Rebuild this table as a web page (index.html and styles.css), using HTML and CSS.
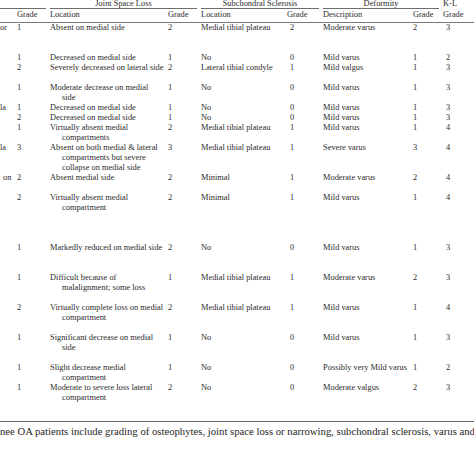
FILE: index.html
```html
<!DOCTYPE html>
<html>
<head>
<meta charset="utf-8">
<link rel="stylesheet" href="styles.css">
</head>
<body>
<div class="page">
<table class="tbl">
<colgroup>
<col class="c0"><col class="c1"><col class="c2"><col class="c3"><col class="c4"><col class="c5"><col class="c6"><col class="c7"><col class="c8">
</colgroup>
<thead>
<tr class="grp">
<th colspan="2"><div class="ul">&nbsp;</div></th>
<th colspan="2"><div class="ul ctr">Joint Space Loss</div></th>
<th colspan="2"><div class="ul ctr">Subchondral Sclerosis</div></th>
<th colspan="2"><div class="ul ctr">Deformity</div></th>
<th class="kl">K-L</th>
</tr>
<tr class="sub">
<th></th><th>Grade</th><th>Location</th><th>Grade</th><th>Location</th><th>Grade</th><th>Description</th><th>Grade</th><th>Grade</th>
</tr>
</thead>
<tbody>
<tr class="l3"><td>or</td><td>1</td><td>Absent on medial side</td><td>2</td><td>Medial tibial plateau</td><td class="n5">2</td><td>Moderate varus</td><td>2</td><td class="n8">3</td></tr>
<tr class="l1"><td></td><td>1</td><td>Decreased on medial side</td><td>1</td><td>No</td><td class="n5">0</td><td>Mild varus</td><td>1</td><td class="n8">2</td></tr>
<tr class="l2"><td></td><td>2</td><td>Severely decreased on lateral side</td><td>2</td><td>Lateral tibial condyle</td><td class="n5">1</td><td>Mild valgus</td><td>1</td><td class="n8">3</td></tr>
<tr class="l2"><td></td><td>1</td><td class="hang">Moderate decrease on medial<br>side</td><td>1</td><td>No</td><td class="n5">0</td><td>Mild varus</td><td>1</td><td class="n8">3</td></tr>
<tr class="l1"><td>la</td><td>1</td><td>Decreased on medial side</td><td>1</td><td>No</td><td class="n5">0</td><td>Mild varus</td><td>1</td><td class="n8">3</td></tr>
<tr class="l1"><td></td><td>2</td><td>Decreased on medial side</td><td>1</td><td>No</td><td class="n5">0</td><td>Mild varus</td><td>1</td><td class="n8">3</td></tr>
<tr class="l2"><td></td><td>1</td><td class="hang">Virtually absent medial<br>compartments</td><td>2</td><td>Medial tibial plateau</td><td class="n5">1</td><td>Mild varus</td><td>1</td><td class="n8">4</td></tr>
<tr class="l3"><td>la</td><td>3</td><td class="hang">Absent on both medial &amp; lateral<br>compartments but severe<br>collapse on medial side</td><td>3</td><td>Medial tibial plateau</td><td class="n5">1</td><td>Severe varus</td><td>3</td><td class="n8">4</td></tr>
<tr class="l2"><td><span class="ind">on</span></td><td>2</td><td>Absent medial side</td><td>2</td><td>Minimal</td><td class="n5">1</td><td>Moderate varus</td><td>2</td><td class="n8">4</td></tr>
<tr class="l5"><td></td><td>2</td><td class="hang">Virtually absent medial<br>compartment</td><td>2</td><td>Minimal</td><td class="n5">1</td><td>Mild varus</td><td>1</td><td class="n8">4</td></tr>
<tr class="l3"><td></td><td>1</td><td>Markedly reduced on medial side</td><td>2</td><td>No</td><td class="n5">0</td><td>Mild varus</td><td>1</td><td class="n8">3</td></tr>
<tr class="l3"><td></td><td>1</td><td class="hang">Difficult because of<br>malalignment; some loss</td><td>1</td><td>Medial tibial plateau</td><td class="n5">1</td><td>Moderate varus</td><td>2</td><td class="n8">3</td></tr>
<tr class="l3"><td></td><td>2</td><td class="hang">Virtually complete loss on medial<br>compartment</td><td>2</td><td>Medial tibial plateau</td><td class="n5">1</td><td>Mild varus</td><td>1</td><td class="n8">4</td></tr>
<tr class="l3"><td></td><td>1</td><td class="hang">Significant decrease on medial<br>side</td><td>1</td><td>No</td><td class="n5">0</td><td>Mild varus</td><td>1</td><td class="n8">3</td></tr>
<tr class="l2"><td></td><td>1</td><td class="hang">Slight decrease medial<br>compartment</td><td>1</td><td>No</td><td class="n5">0</td><td>Possibly very Mild varus</td><td>1</td><td class="n8">2</td></tr>
<tr class="l2"><td></td><td>1</td><td class="hang">Moderate to severe loss lateral<br>compartment</td><td>2</td><td>No</td><td class="n5">0</td><td>Moderate valgus</td><td>2</td><td class="n8">3</td></tr>
</tbody>
</table>
<div class="rule"></div>
<p class="caption">nee OA patients include grading of osteophytes, joint space loss or narrowing, subchondral sclerosis, varus and</p>
</div>
</body>
</html>
```
FILE: styles.css
```css
html, body {
  margin: 0;
  padding: 0;
  background: #fff;
}
.page {
  width: 474px;
  height: 474px;
  overflow: hidden;
  color: #2b2b2b;
  font-family: "Liberation Serif", serif;
}
.tbl {
  width: 474px;
  table-layout: fixed;
  border-collapse: collapse;
  margin-top: -1px;
  font-size: 8.4px;
  line-height: 10px;
}
.c0 { width: 17px; }
.c1 { width: 33px; }
.c2 { width: 118px; }
.c3 { width: 33px; }
.c4 { width: 86px; }
.c5 { width: 36px; }
.c6 { width: 90px; }
.c7 { width: 30px; }
.c8 { width: 31px; }
.tbl th, .tbl td {
  padding: 0;
  text-align: left;
  vertical-align: top;
  font-weight: normal;
  white-space: nowrap;
  overflow: hidden;
}
.grp th {
  padding-right: 4px;
}
.grp .kl {
  padding-right: 0;
}
.ul {
  border-bottom: 1px solid #6e6e6e;
  height: 9px;
}
.ctr {
  text-align: center;
}
.sub th {
  padding-top: 1px;
  padding-bottom: 2px;
  border-bottom: 1.5px solid #7a7a7a;
}
.tbl td.n5, .tbl td.n8 {
  padding-left: 3px;
}
.hang {
  padding-left: 12px !important;
  text-indent: -12px;
}
.ind {
  padding-left: 3px;
}
.l1 { height: 10px; }
.l2 { height: 20px; }
.l3 { height: 30px; }
.l5 { height: 50px; }
.rule {
  height: 0;
  border-top: 1.5px solid #6a6a6a;
  margin-top: 18px;
}
.caption {
  margin: 3px 0 0 0;
  font-size: 10.7px;
  line-height: 12px;
  white-space: nowrap;
  color: #262626;
}
```
